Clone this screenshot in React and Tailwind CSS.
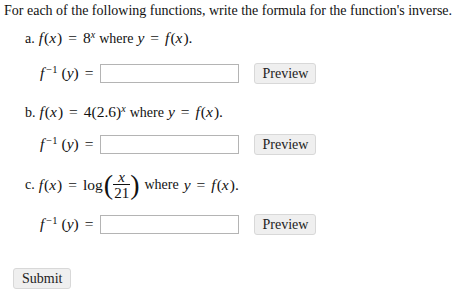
import React from "react";

const serif = { fontFamily: '"Liberation Serif", "Times New Roman", serif' };

const M = ({ children, className = "" }) => (
  <span className={"text-[15.5px] " + className}>{children}</span>
);
const V = ({ children }) => <span className="italic">{children}</span>;
const Eq = () => <span className="mx-[6px] text-[15.5px]">=</span>;

const Fx = ({ v = "x" }) => (
  <M>
    <V>f</V>
    <span className="ml-[1px]">(</span>
    <V>{v}</V>
    <span className="ml-[1px]">)</span>
  </M>
);

const InverseRow = () => (
  <div className="flex items-center pl-[40px]">
    <span className="whitespace-nowrap">
      <M>
        <V>f</V>
      </M>
      <sup className="ml-[2px] mr-[4px] text-[10.5px]">−1</sup>
      <M>
        (<V>y</V>)
      </M>
      <Eq />
    </span>
    <input
      type="text"
      className="ml-[1px] h-[19px] w-[139px] border border-[#b4b4b4] bg-white"
    />
    <button className="ml-[15px] h-[21px] rounded-[3px] border border-[#d8d8d8] bg-[#efefef] px-[7px] text-[14px] leading-none text-[#222]">
      Preview
    </button>
  </div>
);

export default function App() {
  return (
    <div className="min-h-screen bg-white text-[14px] leading-[20px] text-[#111]" style={serif}>
      <p className="px-[4px] pt-[1px]">
        For each of the following functions, write the formula for the function's inverse.
      </p>

      <div className="mt-[7px] whitespace-nowrap pl-[25px]">
        <span className="mr-[4px]">a.</span>
        <Fx />
        <Eq />
        <M>8</M>
        <sup className="text-[10px] italic">x</sup>
        <span className="mx-[4px]">where</span>
        <M>
          <V>y</V>
        </M>
        <Eq />
        <Fx />
        <M>.</M>
      </div>
      <div className="mt-[14px]">
        <InverseRow />
      </div>

      <div className="mt-[18px] whitespace-nowrap pl-[25px]">
        <span className="mr-[4px]">b.</span>
        <Fx />
        <Eq />
        <M>4(2.6)</M>
        <sup className="text-[10px] italic">x</sup>
        <span className="mx-[4px]">where</span>
        <M>
          <V>y</V>
        </M>
        <Eq />
        <Fx />
        <M>.</M>
      </div>
      <div className="mt-[11px]">
        <InverseRow />
      </div>

      <div className="mt-[15px] flex items-center whitespace-nowrap pl-[25px]">
        <span className="mr-[4px]">c.</span>
        <Fx />
        <Eq />
        <M>log</M>
        <span className="ml-[1px] text-[28px] font-light leading-none">(</span>
        <span className="inline-flex flex-col items-center text-[15px] leading-[14px]">
          <span className="px-[2px] italic">x</span>
          <span className="border-t border-[#111] px-[1px] pt-[1px]">21</span>
        </span>
        <span className="text-[28px] font-light leading-none">)</span>
        <span className="mx-[5px]">where</span>
        <M>
          <V>y</V>
        </M>
        <Eq />
        <Fx />
        <M>.</M>
      </div>
      <div className="mt-[14px]">
        <InverseRow />
      </div>

      <div className="mt-[33px] pl-[13px]">
        <button className="h-[21px] rounded-[3px] border border-[#d8d8d8] bg-[#efefef] px-[8px] text-[14px] leading-none text-[#222]">
          Submit
        </button>
      </div>
    </div>
  );
}
